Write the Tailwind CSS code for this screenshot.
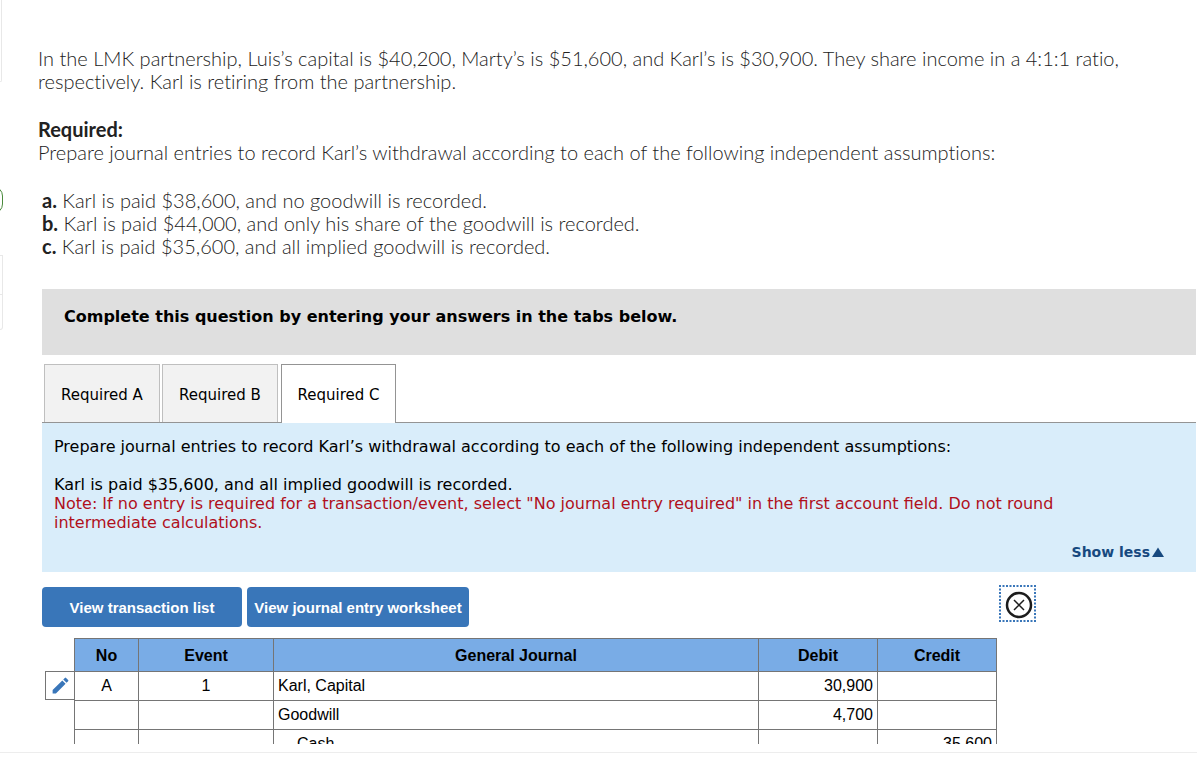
<!DOCTYPE html>
<html lang="en">
<head>
<meta charset="utf-8">
<meta name="viewport" content="width=device-width, initial-scale=1">
<title>LMK partnership</title>
<script src="https://cdn.jsdelivr.net/npm/@tailwindcss/browser@4"></script>
</head>
<body class="bg-white">
<div class="flex h-screen flex-col overflow-hidden">
  <div class="flex min-h-0 flex-1 overflow-hidden">
    <aside class="flex w-[38px] shrink-0 flex-col items-start overflow-hidden" aria-hidden="true">
      <div class="h-[82px] w-[2px] rounded-br-sm border-r border-b border-[#e8e8e8]"></div>
      <div class="mt-[104px] -ml-[24px] h-[28px] w-[27px] rounded-[10px] border border-[#4a8a3c]"></div>
      <div class="mt-[41px] h-[39px] w-[3px] border-t border-r border-[#e8e8e8]"></div>
      <div class="h-[36px] w-[3px] rounded-br border-t border-r border-b border-[#e8e8e8]"></div>
    </aside>
    <main class="min-w-0 flex-1 pt-[47px] pr-px text-black">
      <section class="flex flex-col gap-[25px] pr-[60px] font-['Lato',sans-serif] text-[20px] leading-[23px] font-light text-[#222222] [font-variant-ligatures:none]">
        <p>In the LMK partnership, Luis’s capital is $40,200, Marty’s is $51,600, and Karl’s is $30,900. They share income in a 4:1:1 ratio, respectively. Karl is retiring from the partnership.</p>
        <p><b class="font-bold">Required:</b><br>Prepare journal entries to record Karl’s withdrawal according to each of the following independent assumptions:</p>
        <ul class="pl-1">
          <li><b class="font-bold">a.</b> Karl is paid $38,600, and no goodwill is recorded.</li>
          <li><b class="font-bold">b.</b> Karl is paid $44,000, and only his share of the goodwill is recorded.</li>
          <li><b class="font-bold">c.</b> Karl is paid $35,600, and all implied goodwill is recorded.</li>
        </ul>
      </section>

      <div class="mt-[31px] ml-1 font-['DejaVu_Sans',sans-serif] text-[16px] leading-[19px]">
        <h2 class="h-[66px] bg-[#dfdfdf] px-[22px] pt-[18px] font-bold">Complete this question by entering your answers in the tabs below.</h2>
        <div class="mt-[9px] flex items-stretch pl-[2px] shadow-[inset_0_-1px_0_#949494]" role="tablist">
          <button type="button" role="tab" class="mr-[2px] mb-px h-[58px] w-[116px] border border-b-0 border-[#bfbfbf] bg-[#f2f2f2] pt-[3px] text-[15px]">Required A</button>
          <button type="button" role="tab" class="mr-[3px] mb-px h-[58px] w-[116px] border border-b-0 border-[#bfbfbf] bg-[#f2f2f2] pt-[3px] text-[15px]">Required B</button>
          <button type="button" role="tab" aria-selected="true" class="h-[59px] w-[115px] border border-b-0 border-[#949494] bg-white pt-[2px] text-[15px]">Required C</button>
        </div>
        <section class="bg-[#d9edfa] pt-[14px] pr-8 pb-[10px] pl-3">
          <p>Prepare journal entries to record Karl’s withdrawal according to each of the following independent assumptions:</p>
          <p class="mt-[19px] pr-12">Karl is paid $35,600, and all implied goodwill is recorded.<br><span class="text-[#b0101c]">Note: If no entry is required for a transaction/event, select "No journal entry required" in the first account field. Do not round intermediate calculations.</span></p>
          <div class="mt-[11px] flex justify-end">
            <a href="#" class="flex items-center gap-[2px] text-[14px] leading-[19px] font-bold text-[#17497f]">Show less<svg class="h-[11px] w-[12px]" viewBox="0 0 12 11" fill="currentColor"><path d="M6 .5 12 10H0z"/></svg></a>
          </div>
        </section>
      </div>

      <div class="ml-1 font-['Liberation_Sans',sans-serif]">
        <div class="flex h-[66px] pt-[15px] text-[15px] font-bold">
          <button type="button" class="mr-[5px] h-10 w-[200px] rounded bg-[#3976b9] pt-[2px] text-white">View transaction list</button>
          <button type="button" class="h-10 w-[222px] rounded bg-[#3976b9] pt-[2px] whitespace-nowrap text-white">View journal entry worksheet</button>
          <button type="button" aria-label="Close" class="-mt-[2px] ml-[530px] flex h-[37px] w-[37px] items-center justify-center">
            <svg class="h-[37px] w-[37px]" viewBox="0 0 37 37" fill="none"><path d="M0 1H37M0 36H37M1 0V37M36 0V37" stroke="#3976b9" stroke-width="2" stroke-dasharray="2 1.500"/><circle cx="20" cy="20" r="12" stroke="#1c1c1c" stroke-width="2.500"/><path d="M15 15l10 10M25 15l-10 10" stroke="#1c1c1c" stroke-width="1.500"/></svg>
          </button>
        </div>
        <div class="flex items-start pl-[3px]">
          <button type="button" aria-label="Edit entry" class="mt-[33px] -mr-px flex h-[29px] w-[30px] items-center justify-center border border-[#757575]">
            <svg class="h-[21px] w-[21px] text-[#3976b9]" viewBox="0 0 24 24" fill="currentColor"><path d="M3 17.250V21h3.750L17.810 9.940l-3.750-3.750zM20.710 7.040a1 1 0 0 0 0-1.410l-2.340-2.340a1 1 0 0 0-1.410 0l-1.830 1.830 3.750 3.750z"/></svg>
          </button>
          <table class="w-[923px] table-fixed border-collapse text-[16px] leading-[18px]">
            <colgroup><col class="w-[64px]"><col class="w-[135px]"><col><col class="w-[119px]"><col class="w-[119px]"></colgroup>
            <thead>
              <tr class="h-[33px] bg-[#79ace6]">
                <th class="border border-[#757575] pt-[2px]">No</th><th class="border border-[#757575] pt-[2px]">Event</th><th class="border border-[#757575] pt-[2px]">General Journal</th><th class="border border-[#757575] pt-[2px]">Debit</th><th class="border border-[#757575] pt-[2px]">Credit</th>
              </tr>
            </thead>
            <tbody>
              <tr class="h-[29px]">
                <td class="border border-[#757575] text-center">A</td><td class="border border-[#757575] text-center">1</td><td class="border border-[#757575] pl-1">Karl, Capital</td><td class="border border-[#757575] pr-1 text-right">30,900</td><td class="border border-[#757575]"></td>
              </tr>
              <tr class="h-[29px]">
                <td class="border border-[#757575]"></td><td class="border border-[#757575]"></td><td class="border border-[#757575] pl-1">Goodwill</td><td class="border border-[#757575] pr-1 text-right">4,700</td><td class="border border-[#757575]"></td>
              </tr>
              <tr class="h-[29px]">
                <td class="border border-[#757575]"></td><td class="border border-[#757575]"></td><td class="border border-[#757575] pl-[23px]">Cash</td><td class="border border-[#757575]"></td><td class="border border-[#757575] pr-1 text-right">35,600</td>
              </tr>
            </tbody>
          </table>
        </div>
      </div>
    </main>
  </div>
  <footer class="mt-2 h-2 shrink-0 border-t border-[#ededed]"></footer>
</div>
</body>
</html>
